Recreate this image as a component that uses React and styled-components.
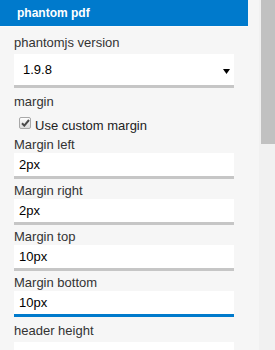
import React from 'react';
import styled, {createGlobalStyle} from 'styled-components';

const GlobalStyle = createGlobalStyle`
  html, body {
    margin: 0;
    padding: 0;
    height: 100%;
    overflow: hidden;
    background: #f6f6f6;
    font-family: "Liberation Sans", Arial, sans-serif;
    font-size: 13px;
    color: #333;
  }
`;

const Page = styled.div`
  display: flex;
  height: 350px;
  overflow: hidden;
`;

const Side = styled.div`
  flex: 1;
  padding-right: 11px;
  overflow: hidden;
`;

const Panel = styled.div`
  width: 248px;
`;

const Title = styled.div`
  height: 26px;
  line-height: 26px;
  padding-left: 17px;
  background: #007acc;
  color: #fff;
  font-weight: bold;
  font-size: 12px;
`;

const Body = styled.div`
  padding: 8px 14px 0 14px;
  border-top: 1px solid #fbfbfb;
`;

const Field = styled.div`
  & + & {
    margin-top: 6px;
  }
`;

const Label = styled.div`
  line-height: 16px;
  margin-bottom: 3px;
`;

const SubLabel = styled.div`
  line-height: 15px;
  margin-bottom: 1px;
`;

const SubField = styled.div`
  margin-top: 4px;
`;

const Input = styled.input`
  display: block;
  box-sizing: content-box;
  width: 215px;
  height: 23px;
  margin: 0;
  padding: 0 0 0 5px;
  border: none;
  border-bottom: 3px solid ${p => (p.$focused ? '#007acc' : '#c6c6c6')};
  background: #fff;
  font-family: inherit;
  font-size: 13px;
  color: #000;
  outline: none;
`;

const SelectWrap = styled.div`
  position: relative;
`;

const Select = styled.select`
  display: block;
  width: 220px;
  height: 34px;
  margin: 0;
  padding: 0 0 0 9px;
  border: none;
  border-bottom: 3px solid #c6c6c6;
  border-radius: 0;
  background: #fff;
  appearance: none;
  font-family: inherit;
  font-size: 13px;
  color: #000;
  outline: none;
`;

const Arrow = styled.svg`
  position: absolute;
  left: 209px;
  top: 15px;
  pointer-events: none;
`;

const CheckRow = styled.label`
  display: flex;
  align-items: flex-start;
  margin-top: 8px;
  line-height: 15px;
  color: #222;
`;

const Box = styled.span`
  box-sizing: border-box;
  width: 12px;
  height: 12px;
  margin: -1px 4px 0 5px;
  border: 1px solid #a8a8a8;
  border-radius: 2px;
  background: linear-gradient(#fdfdfd, #dcdcdc);
  display: flex;
  align-items: center;
  justify-content: center;
`;

const Track = styled.div`
  width: 16px;
  flex: none;
  background: #f1f1f1;
  display: flex;
  justify-content: flex-end;
`;

const Thumb = styled.div`
  width: 14px;
  height: 144px;
  background: #c1c1c1;
`;

function Check({checked}) {
  return (
    <Box>
      {checked && (
        <svg width="9" height="8" viewBox="0 0 9 8">
          <path d="M1 4.2 L3.3 6.6 L8 1" fill="none" stroke="#4a4a4a" strokeWidth="2"/>
        </svg>
      )}
    </Box>
  );
}

const margins = [
  {label: 'Margin left', value: '2px'},
  {label: 'Margin right', value: '2px'},
  {label: 'Margin top', value: '10px'},
  {label: 'Margin bottom', value: '10px', focused: true}
];

export default function App() {
  return (
    <Page>
      <GlobalStyle/>
      <Side>
        <Panel>
          <Title>phantom pdf</Title>
          <Body>
            <Field>
              <Label>phantomjs version</Label>
              <SelectWrap>
                <Select defaultValue="1.9.8">
                  <option value="1.9.8">1.9.8</option>
                </Select>
                <Arrow width="7" height="5" viewBox="0 0 7 5">
                  <polygon points="0,0 7,0 3.5,5" fill="#000"/>
                </Arrow>
              </SelectWrap>
            </Field>
            <Field>
              <Label>margin</Label>
              <CheckRow>
                <Check checked/>
                Use custom margin
              </CheckRow>
              {margins.map(m => (
                <SubField key={m.label}>
                  <SubLabel>{m.label}</SubLabel>
                  <Input defaultValue={m.value} $focused={m.focused}/>
                </SubField>
              ))}
            </Field>
            <Field>
              <Label>header height</Label>
              <Input defaultValue=""/>
            </Field>
          </Body>
        </Panel>
      </Side>
      <Track>
        <Thumb/>
      </Track>
    </Page>
  );
}
